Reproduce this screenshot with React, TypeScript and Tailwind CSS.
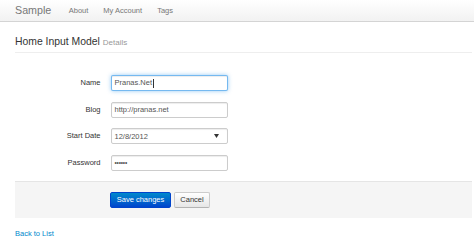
import React from 'react'

/* ── Form field pieces ── */
function Label({ children }: { children: React.ReactNode }) {
  return <label className="w-[85.5px] shrink-0 text-right text-[7.5px] leading-[16px] text-[#333]">{children}</label>
}

function Field({ children, focused }: { children: React.ReactNode; focused?: boolean }) {
  return (
    <div
      className={
        focused
          ? 'ml-[10px] flex h-[16px] w-[117px] items-center rounded-[2px] border border-[rgba(82,168,236,0.8)] bg-white px-[3px] text-[7.5px] text-[#555] shadow-[inset_0_1px_1px_rgba(0,0,0,0.075),0_0_4px_rgba(82,168,236,0.6)]'
          : 'ml-[10px] flex h-[16px] w-[117px] items-center rounded-[2px] border border-[#ccc] bg-white px-[3px] text-[7.5px] text-[#555] shadow-[inset_0_1px_1px_rgba(0,0,0,0.075)]'
      }
    >
      {children}
    </div>
  )
}

const navLinks = ['About', 'My Account', 'Tags']

export default function App() {
  return (
    <div className="h-[246px] w-[474px] overflow-hidden bg-white font-['Liberation_Sans',Arial,sans-serif]">
      {/* Navbar */}
      <nav className="flex h-[22px] items-center border-b border-[#d4d4d4] bg-gradient-to-b from-white to-[#f2f2f2] pl-[15px]">
        <span className="mr-[10px] text-[10.7px] leading-none text-[#777]">Sample</span>
        {navLinks.map((l) => (
          <a key={l} className="px-[7.5px] text-[7.5px] leading-none text-[#777]">
            {l}
          </a>
        ))}
      </nav>

      <div className="pl-[15px] pr-[2px]">
        {/* Page header */}
        <div className="flex h-[31px] items-end border-b border-[#eee] pb-[3px]">
          <h3 className="text-[10.4px] leading-[12px] text-[#333]">
            Home Input Model <small className="text-[8px] text-[#999]">Details</small>
          </h3>
        </div>

        {/* Form */}
        <form className="mt-[22px] flex flex-col gap-[10.7px]">
          <div className="flex items-center">
            <Label>Name</Label>
            <Field focused>
              <span>Pranas.Net</span>
              <span className="ml-[0.5px] h-[9px] w-px bg-[#333]" />
            </Field>
          </div>
          <div className="flex items-center">
            <Label>Blog</Label>
            <Field>http://pranas.net</Field>
          </div>
          <div className="flex items-center">
            <Label>Start Date</Label>
            <Field>
              <span className="flex-1">12/8/2012</span>
              <svg width="5" height="4" viewBox="0 0 5 4" className="mr-[5px]">
                <path d="M0 0h5L2.5 4z" fill="#333" />
              </svg>
            </Field>
          </div>
          <div className="flex items-center">
            <Label>Password</Label>
            <Field>
              <span className="text-[6.5px] tracking-[-0.2px]">••••••</span>
            </Field>
          </div>
        </form>

        {/* Form actions */}
        <div className="mt-[10px] flex gap-[3px] border-t border-[#e5e5e5] bg-[#f5f5f5] py-[10px] pl-[95px]">
          <button className="h-[16px] w-[61px] rounded-[2px] border border-[#0044cc] bg-gradient-to-b from-[#0088cc] to-[#0044cc] text-[7.5px] text-white">
            Save changes
          </button>
          <button className="h-[16px] w-[36px] rounded-[2px] border border-[#ccc] border-b-[#b3b3b3] bg-gradient-to-b from-white to-[#e6e6e6] text-[7.5px] text-[#333]">
            Cancel
          </button>
        </div>

        <a className="mt-[10px] block text-[7.5px] leading-[11px] text-[#0088cc]">Back to List</a>
      </div>
    </div>
  )
}
